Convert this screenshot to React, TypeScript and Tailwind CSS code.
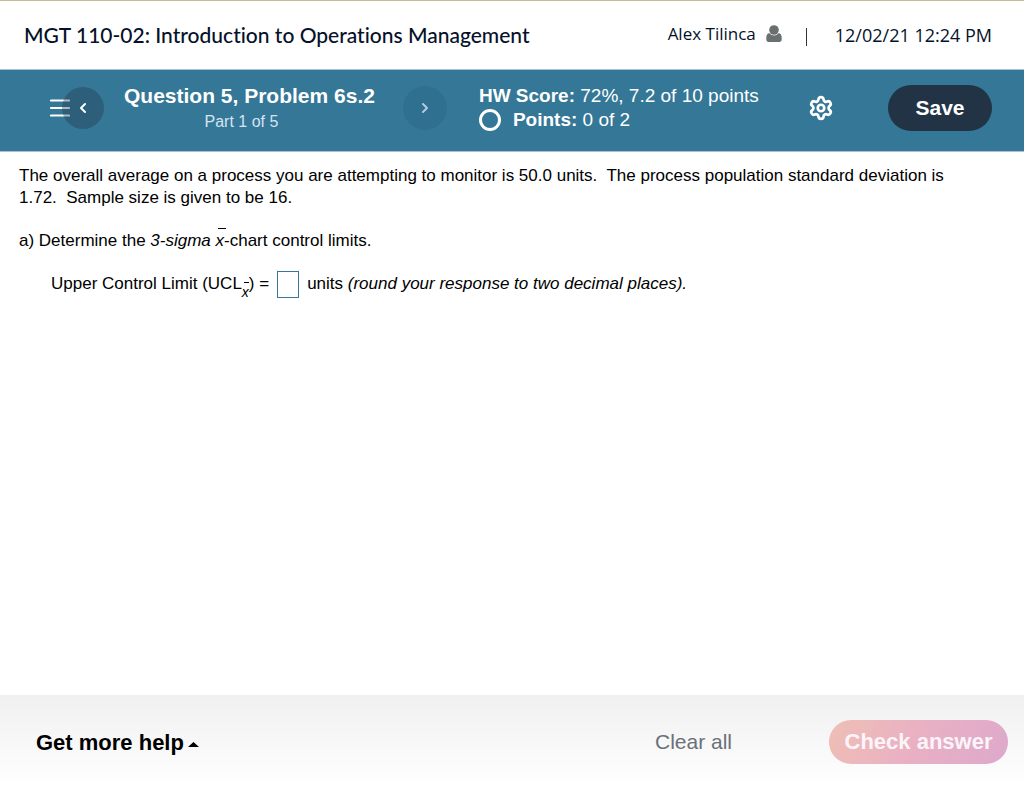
import React, { useState } from 'react'
import { ChevronLeft, ChevronRight, Settings } from 'lucide-react'
import { clsx } from 'clsx'

const UserIcon = () => (
    <svg width="16" height="18" viewBox="0 0 16 18" fill="#6a7070" aria-hidden="true">
        <circle cx="8" cy="5" r="4.800" />
        <path d="M3.200 8C1 8.800 0.300 10.500 0.300 13v1.500C0.300 16 1.200 17 2.800 17h10.400c1.600 0 2.500-1 2.500-2.500V13c0-2.500-.7-4.200-2.900-5C11.600 9.600 10 10.500 8 10.500S4.400 9.600 3.200 8z" />
    </svg>
)

const MenuIcon = () => (
    <svg width="20" height="18" viewBox="0 0 20 18" stroke="#fff" strokeWidth="2.200" strokeLinecap="round" aria-hidden="true">
        <path d="M1 1.500h18M1 9h18M1 16.500h18" />
    </svg>
)

const TopBar = () => (
    <div className="flex h-[69px] items-center justify-between border-t border-[#cdb596] pl-6 pr-8 text-[#05112a]">
        <h1 className="font-['Lato',sans-serif] text-[21px] font-medium [font-variant-ligatures:none]">MGT 110-02: Introduction to Operations Management</h1>
        <div className="flex items-center font-['Open_Sans',sans-serif] font-medium">
            <span className="pb-0.5 text-[17px]">Alex Tilinca</span>
            <span className="ml-2.5 pb-0.5"><UserIcon /></span>
            <span className="mx-6 mt-1 h-[18px] w-px bg-[#333]" />
            <time className="pl-1 text-lg">12/02/21 12:24 PM</time>
        </div>
    </div>
)

const QuestionBar = () => (
    <header className="flex h-[83px] items-center border-y border-[#a9c2d3] bg-[#347797] pb-1.5 pl-[50px] pr-8 text-white">
        <div className="flex items-center">
            <button aria-label="Question list"><MenuIcon /></button>
            <button aria-label="Previous question" className="-ml-2 flex size-[42px] items-center justify-center rounded-full bg-[#22334559]">
                <ChevronLeft size={16} strokeWidth={3} />
            </button>
        </div>
        <div className="ml-5 text-center">
            <h2 className="text-[21px] font-bold leading-7">Question 5, Problem 6s.2</h2>
            <p className="pr-4 text-base leading-6 text-[#d5e4f0]">Part 1 of 5</p>
        </div>
        <button aria-label="Next question" className="ml-7 flex size-[44px] items-center justify-center rounded-full bg-[#2f6f8f]">
            <ChevronRight size={16} strokeWidth={3} className="text-[#b5cad9]" />
        </button>
        <div className="ml-8 text-[19px] leading-6">
            <p><b>HW Score:</b> 72%, 7.2 of 10 points</p>
            <p className="flex items-center">
                <span className="mr-3 size-[22px] rounded-full border-[3px] border-white" />
                <span><b>Points:</b> 0 of 2</span>
            </p>
        </div>
        <button aria-label="Settings" className="ml-auto">
            <Settings size={26} strokeWidth={2.5} />
        </button>
        <button className="ml-[54px] h-[46px] w-[104px] rounded-full bg-[#223345] text-[21px] font-bold">Save</button>
    </header>
)

const XBar = ({ small = false }: { small?: boolean }) => (
    <span className="relative italic">
        x
        <span className={clsx('absolute left-0.5 h-px bg-black', small ? '-top-0.5 w-[5px]' : '-top-[3px] w-2')} />
    </span>
)

const Question = () => {
    const [answer, setAnswer] = useState('')

    return (
        <main className="flex-1 px-[19px] py-[13px] text-[17px] leading-[22px] text-black">
            <p className="pr-8">The overall average on a process you are attempting to monitor is 50.0 units.&nbsp; The process population standard deviation is 1.72.&nbsp; Sample size is given to be 16.</p>
            <p className="mt-[21px]">a) Determine the <i>3-sigma</i> <XBar />-chart control limits.</p>
            <div className="mt-[19px] pl-8">
                <label htmlFor="ucl">
                    Upper Control Limit (UCL<span className="align-[-8px] text-sm leading-none"><XBar small /></span>) =
                </label>
                <input
                    id="ucl"
                    value={answer}
                    onChange={(e) => setAnswer(e.target.value)}
                    className="mx-2 h-[27px] w-[22px] border border-[#347797] align-middle"
                />
                <span>units <i>(round your response to two decimal places).</i></span>
            </div>
        </main>
    )
}

const Footer = () => (
    <footer className="flex h-[93px] items-center justify-between bg-linear-to-b from-[#f0f0f0] to-white pl-9 pr-4">
        <button className="flex items-center gap-1 pt-0.5 text-[22px] font-bold text-black">
            Get more help
            <svg className="mt-1" width="11" height="5" viewBox="0 0 11 5" aria-hidden="true"><path d="M0 5L5.500 0L11 5z" /></svg>
        </button>
        <div className="flex items-center gap-[97px]">
            <button className="text-[21px] text-[#6a7078]">Clear all</button>
            <button className="h-[44px] w-[179px] rounded-full bg-linear-[120deg] from-[#efbfb4] via-[#e9b0c4] to-[#dda9cb] text-[22px] font-bold text-[#fbf5fa]">Check answer</button>
        </div>
    </footer>
)

export default function App() {
    return (
        <div className="flex min-h-screen flex-col bg-white font-['Liberation_Sans',sans-serif]">
            <TopBar />
            <QuestionBar />
            <Question />
            <Footer />
        </div>
    )
}
